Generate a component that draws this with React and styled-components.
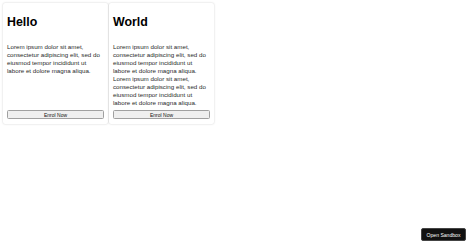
import React from "react";
import styled, { createGlobalStyle } from "styled-components";

const Global = createGlobalStyle`
  html, body { margin: 0; padding: 0; background: #fff; }
  body { font-family: "Liberation Sans", Arial, sans-serif; color: #000; }
`;

const Page = styled.div`
  display: flex;
  align-items: stretch;
  gap: 1px;
  padding: 3px;
`;

const Card = styled.div`
  width: 105px;
  box-sizing: border-box;
  display: flex;
  flex-direction: column;
  padding: 4px 4px 5px 4px;
  border-radius: 2px;
  box-shadow: 0 0 2px rgba(0, 0, 0, 0.22);
  background: #fff;
`;

const Title = styled.h1`
  font-size: 12.4px;
  line-height: 14px;
  font-weight: 700;
  margin: 8px 0 13.6px 0;
`;

const Text = styled.p`
  font-size: 6.2px;
  line-height: 8px;
  margin: 0 0 3px 0;
  color: #2a2a2a;
`;

const Button = styled.button`
  margin-top: auto;
  width: 100%;
  height: 9.5px;
  padding: 0;
  font-family: "Liberation Sans", Arial, sans-serif;
  font-size: 5px;
  line-height: 8px;
  color: #111;
  background: #efefef;
  border: 0.5px solid #a0a0a0;
  border-radius: 1.5px;
`;

const Sandbox = styled.button`
  position: fixed;
  right: 8px;
  bottom: 7px;
  width: 45px;
  height: 13px;
  padding: 0;
  background: #111;
  color: #fff;
  border: 0.5px solid #444;
  border-radius: 2px;
  font-family: "Liberation Sans", Arial, sans-serif;
  font-size: 5.1px;
`;

const lorem =
  "Lorem ipsum dolor sit amet, consectetur adipiscing elit, sed do eiusmod tempor incididunt ut labore et dolore magna aliqua.";

const cards = [
  { title: "Hello", text: lorem },
  { title: "World", text: lorem + " " + lorem },
];

export default function App() {
  return (
    <>
      <Global />
      <Page>
        {cards.map((c) => (
          <Card key={c.title}>
            <Title>{c.title}</Title>
            <Text>{c.text}</Text>
            <Button>Enrol Now</Button>
          </Card>
        ))}
      </Page>
      <Sandbox>Open Sandbox</Sandbox>
    </>
  );
}
